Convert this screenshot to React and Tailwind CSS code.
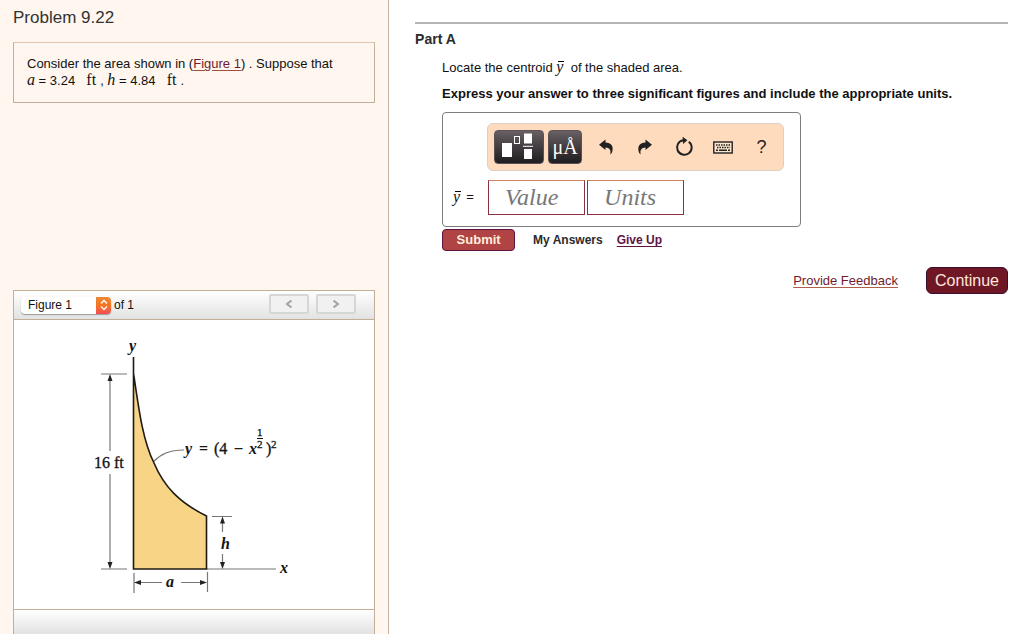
import React from "react";

function YBar() {
  return (
    <span className="relative inline-block font-['Liberation_Serif',serif] text-base italic leading-none">
      y<span className="absolute left-0.5 top-0.5 h-px w-1.5 bg-black" />
    </span>
  );
}

function Unit({ children }) {
  return <span className="mx-1 font-['Liberation_Serif',serif] text-base leading-none">{children}</span>;
}

function Variable({ children }) {
  return <span className="font-['Liberation_Serif',serif] text-base italic leading-none">{children}</span>;
}

function Diagram() {
  return (
    <svg viewBox="14 320 360 289" className="block h-[289px] w-[360px]" role="img" aria-label="Shaded area under a curve">
      <g stroke="#777" strokeWidth="1.2" fill="none">
        <path d="M101 374H127M101 569H127M110 378V451M110 474V565" />
        <path d="M207 569H276M212 516.5H232M222.5 520V532M222.5 554V565" />
        <path d="M134 573V593M207.5 572V592M138 582.5H162M181 582.5H203" />
        <path d="M153 462C161 454 169 450 184 450" />
      </g>
      <path d="M133.5 373C139 411 143 441 154 463C164 487 180 503 206.5 516V569H133.5Z" fill="#f7d486" />
      <path
        d="M133.5 357V569H206.5V516C180 503 164 487 154 463C143 441 139 411 133.5 373"
        fill="none"
        stroke="#1f1a14"
        strokeWidth="1.6"
      />
      <g fill="#222">
        <path d="M110 374L112.5 381H107.5ZM110 569L107.5 562H112.5Z" />
        <path d="M222.5 516.5L225 523.5H220ZM222.5 569L220 562H225Z" />
        <path d="M134 582.5L141 580V585ZM207 582.5L200 580V585Z" />
      </g>
      <g fill="#151515" className="font-['Liberation_Serif',serif] text-base font-bold">
        <text x="129" y="351" fontStyle="italic">y</text>
        <text x="280" y="573" fontStyle="italic">x</text>
        <text x="166" y="587" fontStyle="italic">a</text>
        <text x="221" y="549" fontStyle="italic">h</text>
        <text x="94" y="468" fontWeight="400" stroke="#151515" strokeWidth=".35">16 ft</text>
        <text x="185" y="454" fontStyle="italic">y</text>
        <text x="199" y="454">=</text>
        <text x="214" y="454" fontWeight="400" stroke="#151515" strokeWidth=".35">(4</text>
        <text x="234" y="454" fontWeight="400" stroke="#151515" strokeWidth=".35">−</text>
        <text x="249" y="454" fontStyle="italic">x</text>
        <text x="266" y="454" fontWeight="400" stroke="#151515" strokeWidth=".35">)</text>
      </g>
      <g fill="#151515" stroke="#151515" strokeWidth=".3" className="font-['Liberation_Serif',serif] text-[11px]">
        <text x="257" y="436">1</text>
        <text x="257" y="448">2</text>
        <text x="271" y="448">2</text>
      </g>
      <path d="M257 438.5H263" stroke="#151515" />
    </svg>
  );
}

function UndoIcon({ flipped = false }) {
  return (
    <svg viewBox="0 0 16 16" className={flipped ? "size-4 -scale-x-100" : "size-4"} aria-hidden="true">
      <path d="M1 5.700L7.500 .500V3.500C13 3.700 15.800 7 14.300 12.500C14 13.700 13.300 15 12.300 15.300C13.200 11.500 11.700 8.800 7.500 8.600V11Z" fill="#222" />
    </svg>
  );
}

function ResetIcon() {
  return (
    <svg viewBox="0 0 20 20" className="size-5" aria-hidden="true">
      <path d="M14.800 4.700A7.300 7.300 0 1 1 9 3.300" fill="none" stroke="#222" strokeWidth="2" />
      <path d="M8.600 -.3L13.400 3.300L9 7Z" fill="#222" />
    </svg>
  );
}

function KeyboardIcon() {
  return (
    <svg viewBox="0 0 20 14" className="h-3.5 w-5" aria-hidden="true">
      <rect x=".8" y="2" width="18.400" height="11" fill="#fbe7cc" stroke="#222" strokeWidth="1.400" />
      <path d="M3 5H17M4 7.500H17" stroke="#222" strokeWidth="1.400" strokeDasharray="1.500 1" />
      <path d="M3 10.200H5M6 10.200H14M15 10.200H17" stroke="#222" strokeWidth="1.400" />
    </svg>
  );
}

function TemplateIcon() {
  return (
    <svg viewBox="0 0 36 28" className="h-7 w-9" aria-hidden="true">
      <path d="M1 10H11V24H1ZM23 .5H31V10.500H23ZM23 16H31V26H23Z" fill="#fff" />
      <rect x="13.500" y="3.500" width="5" height="7" fill="none" stroke="#fff" />
      <path d="M22 13.300H32" stroke="#fff" />
    </svg>
  );
}

const darkKey =
  "flex h-[34px] items-center justify-center rounded border border-[#5b5257] bg-linear-to-b from-[#696064] to-[#201e20] text-white";
const toolKey = "flex h-8 w-[39px] items-center justify-center";
const pageKey =
  "flex h-5 w-10 items-center justify-center rounded-xs border-2 border-[#d6d6d6] bg-[#f1f1f1] text-[#a2a2a2]";
const answerBox =
  "h-[35px] w-[97px] border border-x-[#8d3040] border-b-[#8d3040] border-t-[#cf8060] bg-white px-4 font-['Liberation_Serif',serif] text-2xl italic placeholder:text-[#777] placeholder:opacity-100 outline-none";

function Chevron({ right = false }) {
  return (
    <svg viewBox="0 0 8 10" className="h-2.5 w-2" aria-hidden="true">
      <path d={right ? "M1.500 1.500L6 5L1.500 8.500" : "M6.500 1.500L2 5L6.500 8.500"} fill="none" stroke="currentColor" strokeWidth="2" />
    </svg>
  );
}

function ProblemPane() {
  return (
    <aside className="flex w-[38%] min-w-[389px] shrink-0 flex-col border-r border-[#c9b3a2] bg-[#fef6ef] px-[13px]">
      <h1 className="pt-2 text-[17px] leading-5 text-[#333]">Problem 9.22</h1>
      <div className="mt-3.5 border border-x-[#c3b09c] border-b-[#c3b09c] border-t-[#dfc6b2] px-[13px] pb-[13px] pt-[13px] text-[13px] leading-4">
        <p>
          Consider the area shown in (
          <a href="#figure" className="text-[#701b2e] underline decoration-[#a34d3b] underline-offset-2">Figure 1</a>) . Suppose that
        </p>
        <p className="whitespace-nowrap leading-4">
          <Variable>a</Variable> = 3.24 &nbsp;<Unit>ft</Unit>, <Variable>h</Variable> = 4.84 &nbsp;<Unit>ft</Unit>.
        </p>
      </div>

      <section id="figure" className="mt-auto border border-b-0 border-[#c3ae99] bg-white">
        <div className="flex h-[29px] items-center border-b border-b-[#c3ae99] bg-linear-to-b from-white to-[#e2e2e2] pl-[7px] pr-[18px] text-xs">
          <div className="relative mr-[3px]">
            <select
              aria-label="Figure"
              className="block h-[17px] w-[90px] appearance-none rounded bg-white pl-[7px] text-xs leading-4 shadow-[0_1px_1px_#999]"
            >
              <option>Figure 1</option>
            </select>
            <span className="pointer-events-none absolute right-0 top-0 flex h-[17px] w-[15px] items-center justify-center rounded-r bg-linear-to-b from-[#e88a35] via-[#f57520] to-[#f44a50]">
              <svg viewBox="0 0 8 12" className="h-3 w-2" aria-hidden="true">
                <path d="M1 4.500L4 1.500L7 4.500M1 7.500L4 10.500L7 7.500" fill="none" stroke="#fff" strokeWidth="1.3" />
              </svg>
            </span>
          </div>
          <span>of 1</span>
          <div className="mb-0.5 ml-auto flex gap-[7px]">
            <button type="button" aria-label="Previous figure" className={pageKey}><Chevron /></button>
            <button type="button" aria-label="Next figure" className={pageKey}><Chevron right /></button>
          </div>
        </div>
        <Diagram />
        <div className="h-[25px] border-t border-t-[#c3ae99] bg-linear-to-b from-white to-[#e2e2e2]" />
      </section>
    </aside>
  );
}

function AnswerPane() {
  return (
    <main className="min-w-0 flex-1 pl-[26px] pr-4 pt-[22px]">
      <section className="border-t-2 border-[#b5b5b5]">
        <h2 className="pt-[7px] text-sm font-bold leading-4 text-[#2b2b2b]">Part A</h2>
        <div className="pl-[27px]">
          <p className="mt-3 text-[13px] leading-4">
            Locate the centroid <YBar /> &nbsp;of the shaded area.
          </p>
          <p className="mt-2.5 text-[13px] font-bold leading-4">
            Express your answer to three significant figures and include the appropriate units.
          </p>
          <form onSubmit={(e) => e.preventDefault()}>
            <div className="mt-2.5 w-[359px] rounded border border-[#7d7d7d] pb-[11px] pl-2.5 pr-4 pt-2.5">
              <div className="ml-[34px] flex h-12 items-center rounded-md border border-[#dccfc6] bg-[#ffdbbd] pl-1.5">
                <button type="button" aria-label="Templates" className={`${darkKey} w-[50px]`}><TemplateIcon /></button>
                <button type="button" aria-label="Symbols" className={`${darkKey} ml-1 mr-1 w-[34px] font-['Liberation_Serif',serif] text-xl`}>μÅ</button>
                <button type="button" aria-label="Undo" className={toolKey}><UndoIcon /></button>
                <button type="button" aria-label="Redo" className={toolKey}><UndoIcon flipped /></button>
                <button type="button" aria-label="Reset" className={toolKey}><ResetIcon /></button>
                <button type="button" aria-label="Keyboard shortcuts" className={toolKey}><KeyboardIcon /></button>
                <button type="button" aria-label="Help" className={`${toolKey} text-lg text-[#222]`}>?</button>
              </div>
              <div className="mt-[9px] flex items-center">
                <label htmlFor="value" className="flex w-[35px] items-center gap-1.5 pb-0.5 text-[13px]"><YBar /><span>=</span></label>
                <input id="value" placeholder="Value" className={answerBox} />
                <input aria-label="Units" placeholder="Units" className={`${answerBox} ml-0.5`} />
              </div>
            </div>
            <div className="mt-0.5 flex items-center text-xs font-bold text-[#2b2b2b]">
              <button type="submit" className="h-[22px] w-[73px] rounded-sm border border-[#5b1440] bg-[#b04343] text-[13px] text-[#ffeedd]">Submit</button>
              <span className="ml-[18px]">My Answers</span>
              <a href="#give-up" className="ml-3.5 text-[#5e1545] underline underline-offset-2">Give Up</a>
            </div>
          </form>
        </div>
      </section>
      <div className="mt-4 flex items-center justify-end gap-7">
        <a href="#feedback" className="text-[13px] text-[#701b2e] underline decoration-[#b0604a] underline-offset-2">Provide Feedback</a>
        <button type="button" className="h-[27px] rounded-md border border-[#3d0d2c] bg-[#701726] px-2 text-base text-[#ffe8dc]">Continue</button>
      </div>
    </main>
  );
}

export default function App() {
  return (
    <div className="flex min-h-screen bg-white font-['Liberation_Sans',Arial,sans-serif] text-[#111]">
      <ProblemPane />
      <AnswerPane />
    </div>
  );
}
